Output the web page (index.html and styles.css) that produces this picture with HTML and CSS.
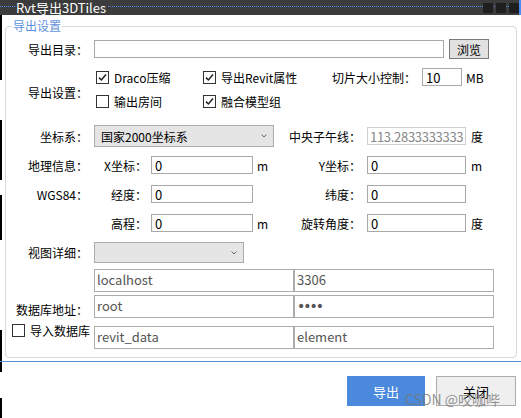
FILE: index.html
```html
<!DOCTYPE html>
<html lang="zh-CN">
<head>
    <meta charset="UTF-8">
    <title>Rvt导出3DTiles</title>
    <link rel="stylesheet" href="styles.css">
</head>
<body>
    <div class="window">
        <div class="titlebar">
            <span class="title">Rvt导出3DTiles</span>
            <div class="controls"><span></span><span></span><span></span></div>
        </div>

        <div class="group">
            <div class="group-title">导出设置</div>

            <div class="row row-dir">
                <span class="lbl">导出目录：</span>
                <input class="txt dir" type="text">
                <button class="browse">浏览</button>
            </div>

            <div class="row row-opts">
                <span class="lbl opts-lbl">导出设置：</span>
                <div class="opts">
                    <div class="opt-line">
                        <label class="check"><span class="box"><svg width="11" height="11" viewBox="0 0 11 11"><path d="M2 5.6 L4.4 8 L9 2.6" fill="none" stroke="#222" stroke-width="1.5"/></svg></span>Draco压缩</label>
                        <label class="check"><span class="box"><svg width="11" height="11" viewBox="0 0 11 11"><path d="M2 5.6 L4.4 8 L9 2.6" fill="none" stroke="#222" stroke-width="1.5"/></svg></span>导出Revit属性</label>
                        <span class="size-lbl">切片大小控制：</span>
                        <input class="txt size" type="text" value="10">
                        <span class="unit">MB</span>
                    </div>
                    <div class="opt-line">
                        <label class="check"><span class="box"></span>输出房间</label>
                        <label class="check"><span class="box"><svg width="11" height="11" viewBox="0 0 11 11"><path d="M2 5.6 L4.4 8 L9 2.6" fill="none" stroke="#222" stroke-width="1.5"/></svg></span>融合模型组</label>
                    </div>
                </div>
            </div>

            <div class="row row-coord">
                <span class="lbl">坐标系：</span>
                <div class="select coord-select">
                    <span>国家2000坐标系</span>
                    <svg width="6" height="4" viewBox="0 0 6 4"><path d="M0.5 0.5 L3 3 L5.5 0.5" fill="none" stroke="#666"/></svg>
                </div>
                <span class="mid-lbl">中央子午线：</span>
                <input class="txt mid" type="text" value="113.2833333333" readonly>
                <span class="unit2">度</span>
            </div>

            <div class="row row-num row-geo">
                <span class="lbl">地理信息：</span>
                <span class="sub">X坐标：</span>
                <input class="txt num" type="text" value="0">
                <span class="unit-m">m</span>
                <span class="sub2">Y坐标：</span>
                <input class="txt num2" type="text" value="0">
                <span class="unit2">m</span>
            </div>

            <div class="row row-num">
                <span class="lbl">WGS84：</span>
                <span class="sub">经度：</span>
                <input class="txt num" type="text" value="0">
                <span class="unit-m"></span>
                <span class="sub2">纬度：</span>
                <input class="txt num2" type="text" value="0">
            </div>

            <div class="row row-num">
                <span class="lbl"></span>
                <span class="sub">高程：</span>
                <input class="txt num" type="text" value="0">
                <span class="unit-m">m</span>
                <span class="sub2">旋转角度：</span>
                <input class="txt num2" type="text" value="0">
                <span class="unit2">度</span>
            </div>

            <div class="row row-view">
                <span class="lbl">视图详细：</span>
                <div class="select view-select">
                    <span></span>
                    <svg width="6" height="4" viewBox="0 0 6 4"><path d="M0.5 0.5 L3 3 L5.5 0.5" fill="none" stroke="#666"/></svg>
                </div>
            </div>

            <div class="db">
                <div class="db-side">
                    <div class="db-lbl">数据库地址：</div>
                    <label class="db-check"><span class="box"></span>导入数据库</label>
                </div>
                <div class="db-cells">
                    <div class="db-row">
                        <input class="cell" type="text" value="localhost">
                        <input class="cell" type="text" value="3306">
                    </div>
                    <div class="db-row">
                        <input class="cell" type="text" value="root">
                        <input class="cell pw" type="password" value="root">
                    </div>
                    <div class="db-row db-row-last">
                        <input class="cell" type="text" value="revit_data">
                        <input class="cell" type="text" value="element">
                    </div>
                </div>
            </div>
        </div>

        <div class="divider"></div>

        <div class="footer">
            <button class="btn btn-primary">导出</button>
            <button class="btn btn-close">关闭</button>
        </div>

        <div class="watermark">CSDN @咬咖哔</div>
    </div>
</body>
</html>
```

FILE: styles.css
```css
body {
    margin: 0;
    font-family: "Noto Sans CJK SC", "Noto Sans", sans-serif;
    font-size: 12px;
    color: #000;
}

.window {
    position: relative;
    width: 521px;
    height: 418px;
    overflow: hidden;
    background:
        linear-gradient(to bottom,
            transparent 0 15px, #000 15px 80px,
            transparent 80px 120px, #000 120px 180px,
            transparent 180px 195px, #000 195px 240px,
            transparent 240px 330px, #000 330px 372px,
            transparent 372px 398px, #000 398px 418px) left top / 2px 100% no-repeat,
        #fff;
}

/* title bar */
.titlebar {
    position: relative;
    display: flex;
    align-items: center;
    height: 15px;
    background: #3c3c3c;
    border-right: 2px solid #4a8cf5;
}

.titlebar::before {
    content: "";
    position: absolute;
    left: 0;
    right: 0;
    top: 6px;
    height: 1px;
    background: repeating-linear-gradient(to right, #4f8ef7 0 1px, transparent 1px 2px);
}

.title {
    position: relative;
    margin-left: 16px;
    padding-right: 1px;
    background: #3c3c3c;
    color: #fff;
    font-size: 13px;
    line-height: 15px;
    white-space: nowrap;
}

.controls {
    position: relative;
    display: flex;
    gap: 3px;
    margin-left: auto;
}

.controls span {
    width: 10px;
    height: 10px;
    background: #1f1f1f;
}

/* group box */
.group {
    position: relative;
    margin: 11px 4px 0 5px;
    padding: 11px 0 8px;
    border: 1px solid #d3d9e0;
    border-radius: 4px;
}

.group-title {
    position: absolute;
    top: -9px;
    left: 6px;
    padding: 0 1px;
    background: #fff;
    color: #5f92dc;
    line-height: 16px;
}

.row {
    display: flex;
    align-items: center;
}

.lbl {
    flex-shrink: 0;
    width: 82px;
    margin-right: 6px;
    text-align: right;
    white-space: nowrap;
}

.txt {
    box-sizing: border-box;
    height: 18px;
    margin: 0;
    padding: 0 3px;
    border: 1px solid #a9a9a9;
    background: #fff;
    font: inherit;
    font-size: 13px;
    color: #000;
    outline: none;
}

.row-dir {
    height: 22px;
}

.dir {
    width: 350px;
}

.browse {
    box-sizing: border-box;
    width: 40px;
    height: 20px;
    margin-left: 5px;
    padding: 0;
    border: 1px solid #7a7a7a;
    background: #e1e1e1;
    font: inherit;
    color: #000;
}

/* export options */
.row-opts {
    align-items: flex-start;
    margin-top: 5px;
}

.opts-lbl {
    padding-top: 20px;
    line-height: 16px;
}

.opt-line {
    display: flex;
    align-items: center;
    height: 24px;
}

.check {
    display: flex;
    align-items: center;
    width: 107px;
    white-space: nowrap;
}

.box {
    box-sizing: border-box;
    display: flex;
    flex-shrink: 0;
    width: 13px;
    height: 13px;
    margin: 0 5px 0 2px;
    border: 1px solid #333;
    background: #fff;
}

.size-lbl {
    width: 108px;
    margin-right: 6px;
    text-align: right;
    white-space: nowrap;
}

.size {
    width: 40px;
}

.unit {
    padding-left: 4px;
}

/* coordinates */
.row-coord {
    height: 22px;
    margin-top: 12px;
}

.select {
    box-sizing: border-box;
    display: flex;
    align-items: center;
    justify-content: space-between;
    padding: 0 6px;
    border: 1px solid #acacac;
    background: #e5e5e5;
}

.coord-select {
    width: 180px;
    height: 22px;
}

.mid-lbl {
    width: 87px;
    margin-right: 6px;
    text-align: right;
    white-space: nowrap;
}

.mid {
    width: 99px;
    padding: 0 2px;
    border-color: #cfcfcf;
    color: #888;
    letter-spacing: -0.3px;
}

.unit2 {
    padding-left: 5px;
}

.row-num {
    height: 18px;
    margin-top: 11px;
}

.row-geo {
    margin-top: 9px;
}

.sub {
    width: 53px;
    margin-right: 4px;
    text-align: right;
    white-space: nowrap;
}

.num {
    width: 102px;
}

.unit-m {
    width: 26px;
    padding-left: 4px;
}

.sub2 {
    width: 78px;
    margin-right: 6px;
    text-align: right;
    white-space: nowrap;
}

.num2 {
    width: 99px;
}

.row-view {
    height: 21px;
    margin-top: 10px;
}

.view-select {
    width: 150px;
    height: 21px;
}

/* database */
.db {
    display: flex;
    margin-top: 6px;
}

.db-side {
    flex-shrink: 0;
    width: 88px;
    padding-top: 33px;
}

.db-lbl {
    padding-right: 6px;
    line-height: 16px;
    text-align: right;
    white-space: nowrap;
}

.db-check {
    display: flex;
    align-items: center;
    height: 16px;
    margin-top: 4px;
    padding-left: 4px;
    white-space: nowrap;
}

.db-row {
    display: flex;
}

.db-row + .db-row {
    margin-top: 3px;
}

.db-row-last.db-row {
    margin-top: 8px;
}

.cell {
    box-sizing: border-box;
    width: 200px;
    height: 23px;
    margin: 0;
    padding: 0 2px 2px;
    border: 1px solid #acacac;
    background: #fff;
    font: inherit;
    font-size: 13px;
    color: #555;
    outline: none;
}

.pw {
    font-family: "DejaVu Sans", sans-serif;
    font-size: 14px;
    letter-spacing: -2px;
}

/* bottom */
.divider {
    height: 1px;
    margin-top: 3px;
    background: #5f8fd6;
}

.footer {
    display: flex;
    justify-content: flex-end;
    gap: 11px;
    padding: 14px 5px 0 0;
}

.btn {
    box-sizing: border-box;
    height: 30px;
    padding: 0;
    font: inherit;
    font-size: 13px;
}

.btn-primary {
    width: 78px;
    border: none;
    background: #4a89dc;
    color: #fff;
}

.btn-close {
    width: 80px;
    border: 1px solid #adadad;
    background: #efefef;
    color: #000;
}

.watermark {
    position: absolute;
    left: 405px;
    top: 389px;
    font-size: 14px;
    color: rgba(120, 120, 120, 0.8);
    white-space: nowrap;
    pointer-events: none;
}
```
